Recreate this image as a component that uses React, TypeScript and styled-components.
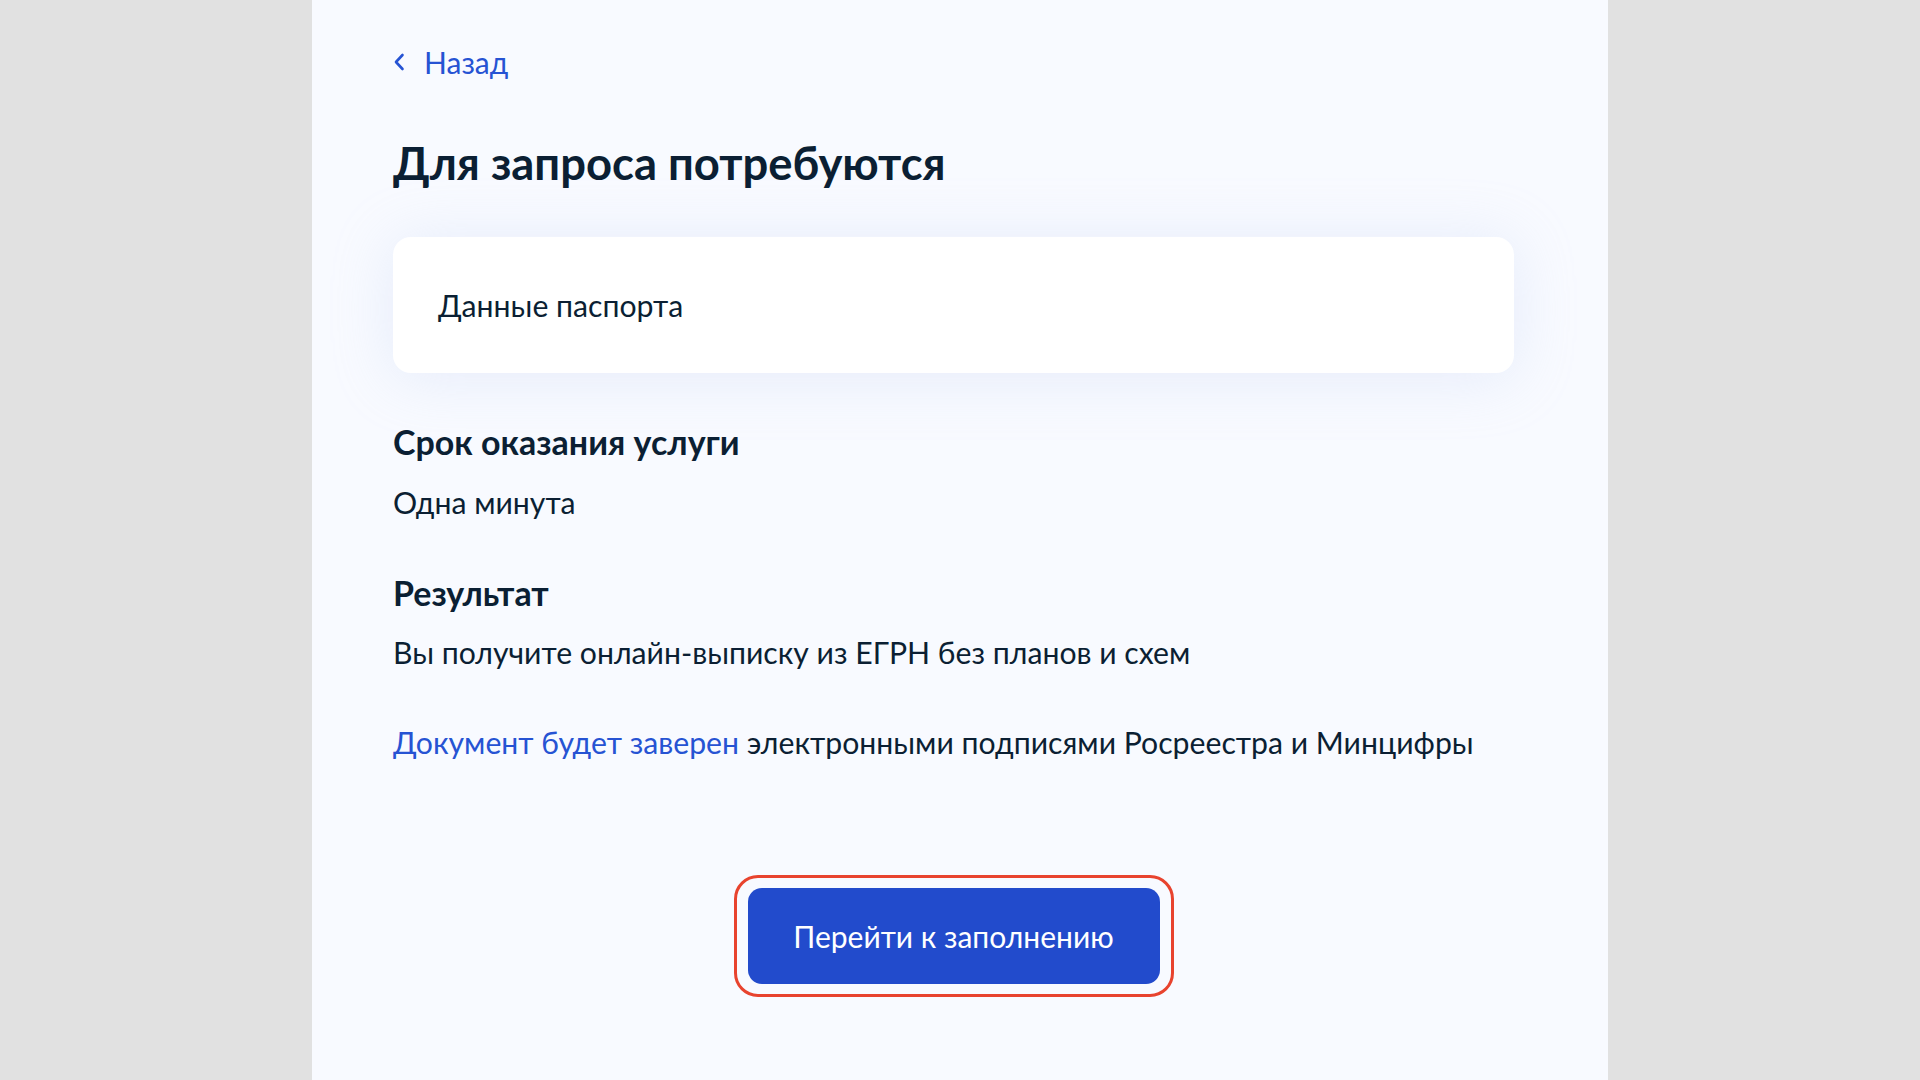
import * as React from "react";
import styled, { createGlobalStyle } from "styled-components";

const GlobalStyle = createGlobalStyle`
	html, body {
		margin: 0;
		padding: 0;
		background: #e1e1e1;
		font-family: Lato, "Noto Sans", sans-serif;
		color: #0b1f33;
	}
`;

export const Page = styled.div`
	display: flex;
	justify-content: center;
	min-height: 100vh;
	background: #e1e1e1;
`;

export const Panel = styled.main`
	box-sizing: border-box;
	width: 1296px;
	min-height: 1080px;
	padding: 44px 94px 0 81px;
	background: #f8faff;
	display: flex;
	flex-direction: column;
`;

export const BackLink = styled.a`
	display: flex;
	align-items: center;
	gap: 19px;
	height: 36px;
	font-size: 30px;
	line-height: 36px;
	color: #2653d3;
	text-decoration: none;
	cursor: pointer;
`;

export const Title = styled.h1`
	margin: 58px 0 0;
	font-size: 45.4px;
	line-height: 50px;
	font-weight: 700;
	color: #0b1f33;
`;

export const Card = styled.div`
	box-sizing: border-box;
	margin-top: 49px;
	height: 136px;
	padding: 0 45px;
	display: flex;
	align-items: center;
	background: #fff;
	border-radius: 18px;
	box-shadow: 0 4px 60px rgba(190, 205, 240, 0.3);
	font-size: 30.2px;
	line-height: 36px;
`;

export const SectionTitle = styled.h2<{ $gap: number }>`
	margin: ${(p) => p.$gap}px 0 0;
	font-size: 34px;
	line-height: 40px;
	font-weight: 700;
	color: #0b1f33;
`;

export const Text = styled.p<{ $gap: number }>`
	margin: ${(p) => p.$gap}px 0 0;
	font-size: 30.2px;
	line-height: 36px;
	color: #0b1f33;
`;

export const InlineLink = styled.a`
	color: #2653d3;
	text-decoration: none;
	cursor: pointer;
`;

export const Actions = styled.div`
	display: flex;
	justify-content: center;
	margin-top: 115px;
`;

export const Highlight = styled.div`
	padding: 10px 11px;
	border: 3px solid #e8432e;
	border-radius: 24px;
`;

export const PrimaryButton = styled.button`
	width: 412px;
	height: 96px;
	border: none;
	border-radius: 14px;
	background: #224bcc;
	color: #fff;
	font-family: Lato, "Noto Sans", sans-serif;
	font-size: 30px;
	cursor: pointer;
`;

const Chevron = () => (
	<svg width="12" height="20" viewBox="0 0 12 20" fill="none">
		<path d="M9.5 3 L3 10 L9.5 17" stroke="#2653d3" strokeWidth="2.6" strokeLinecap="round" strokeLinejoin="round" />
	</svg>
);

export default function App() {
	return (
		<Page>
			<GlobalStyle />
			<Panel>
				<BackLink>
					<Chevron />
					Назад
				</BackLink>
				<Title>Для запроса потребуются</Title>
				<Card>Данные паспорта</Card>
				<SectionTitle $gap={49}>Срок оказания услуги</SectionTitle>
				<Text $gap={22}>Одна минута</Text>
				<SectionTitle $gap={53}>Результат</SectionTitle>
				<Text $gap={21}>Вы получите онлайн-выписку из ЕГРН без планов и схем</Text>
				<Text $gap={54}>
					<InlineLink>Документ будет заверен</InlineLink> электронными подписями Росреестра и Минцифры
				</Text>
				<Actions>
					<Highlight>
						<PrimaryButton>Перейти к заполнению</PrimaryButton>
					</Highlight>
				</Actions>
			</Panel>
		</Page>
	);
}
